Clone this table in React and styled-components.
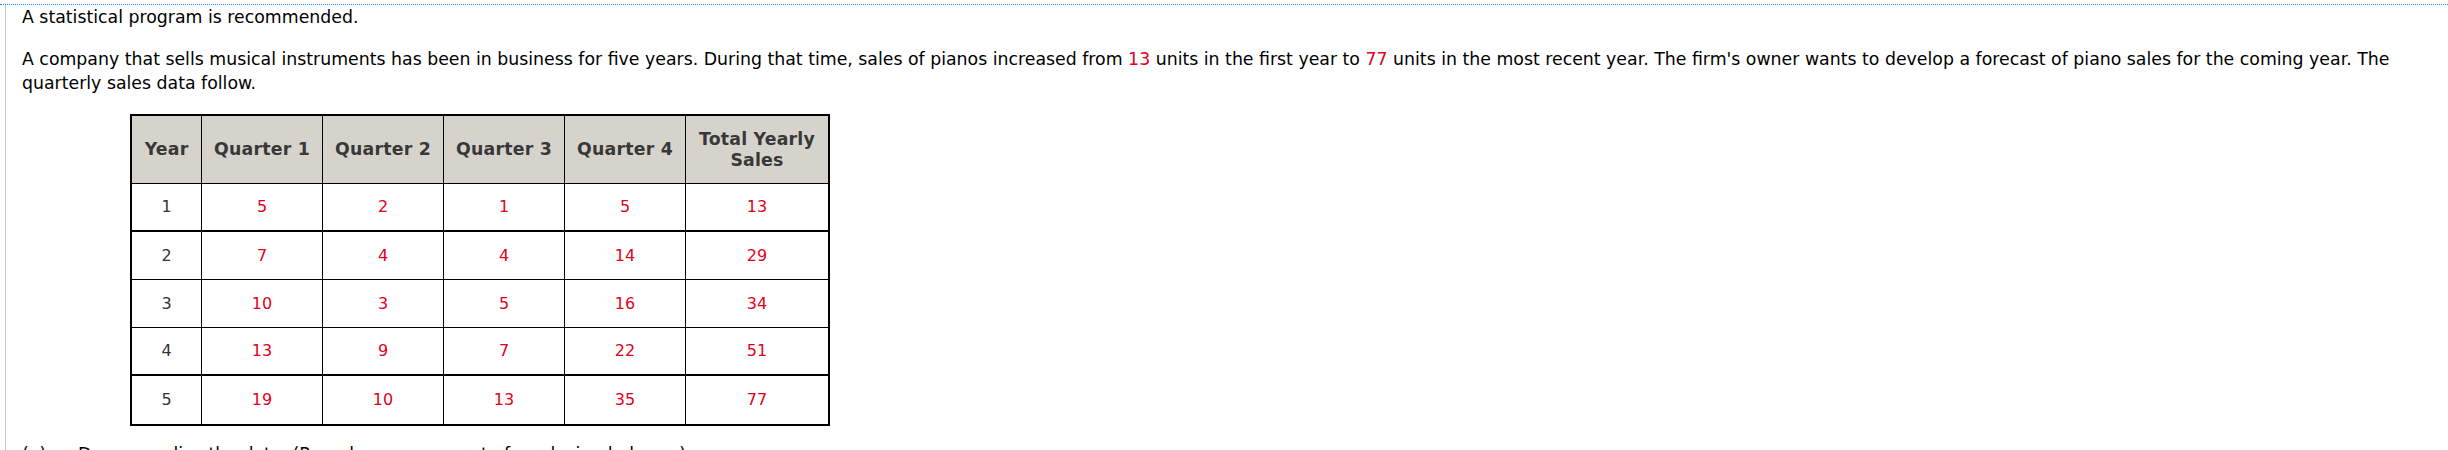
import styled, { createGlobalStyle } from 'styled-components';

const GlobalStyle = createGlobalStyle`
  body {
    margin: 0;
    background: #fff;
    font-family: "DejaVu Sans", Verdana, sans-serif;
  }
`;

const Page = styled.div`
  width: 2448px;
  height: 450px;
  overflow: hidden;
  padding-top: 4px;
  box-sizing: border-box;
`;

const DottedRule = styled.div`
  border-top: 1px dotted #1f86e0;
`;

const Panel = styled.div`
  margin-left: 5px;
  border-left: 1px solid #c8c8c8;
  padding: 1px 0 0 16px;
  min-height: 460px;
  color: #000;
  font-size: 17.33px;
  line-height: 23.4px;
`;

const Para = styled.p`
  margin: 0 0 19px;
`;

const Red = styled.span`
  color: #e3001b;
`;

const TableWrap = styled.div`
  margin-left: 108px;
`;

const Table = styled.table`
  border-collapse: separate;
  border-spacing: 0;
  border: 2px solid #000;
  font-size: 16px;
`;

const HeadCell = styled.th`
  box-sizing: border-box;
  width: ${p => p.$w}px;
  height: 68px;
  padding: 0 6px;
  background: #d6d3cc;
  color: #383838;
  font-size: 17.33px;
  font-weight: bold;
  letter-spacing: 0.2px;
  line-height: 21px;
  text-align: center;
  border-right: 1px solid #000;
  border-bottom: 1px solid #000;

  &:last-child {
    border-right: 0;
  }
`;

const Cell = styled.td`
  box-sizing: border-box;
  height: 48px;
  padding: 0 8px;
  text-align: center;
  line-height: 20px;
  color: ${p => (p.$red ? '#e3001b' : '#333')};
  border-right: 1px solid #000;
  border-bottom: ${p => (p.$last ? 0 : p.$heavy ? 2 : 1)}px solid #000;

  &:last-child {
    border-right: 0;
  }
`;

const Part = styled.div`
  display: flex;
  margin-top: 17px;
`;

const PartLabel = styled.span`
  width: 56px;
  flex-shrink: 0;
`;

const columns = [
  { label: 'Year', w: 70 },
  { label: 'Quarter 1', w: 121 },
  { label: 'Quarter 2', w: 121 },
  { label: 'Quarter 3', w: 121 },
  { label: 'Quarter 4', w: 121 },
  { label: 'Total Yearly Sales', w: 142 },
];

const rows = [
  [1, 5, 2, 1, 5, 13],
  [2, 7, 4, 4, 14, 29],
  [3, 10, 3, 5, 16, 34],
  [4, 13, 9, 7, 22, 51],
  [5, 19, 10, 13, 35, 77],
];

// rows 1 and 4 render with a heavier rule underneath in the source
const heavyRows = [0, 3];

export default function App() {
  return (
    <Page>
      <GlobalStyle />
      <DottedRule />
      <Panel>
        <Para>A statistical program is recommended.</Para>
        <Para>
          A company that sells musical instruments has been in business for five years. During that
          time, sales of pianos increased from <Red>13</Red> units in the first year to <Red>77</Red>{' '}
          units in the most recent year. The firm's owner wants to develop a forecast of piano sales
          for the coming year. The quarterly sales data follow.
        </Para>
        <TableWrap>
          <Table>
            <thead>
              <tr>
                {columns.map(c => (
                  <HeadCell key={c.label} $w={c.w}>
                    {c.label}
                  </HeadCell>
                ))}
              </tr>
            </thead>
            <tbody>
              {rows.map((r, i) => (
                <tr key={r[0]}>
                  {r.map((v, j) => (
                    <Cell
                      key={j}
                      $red={j > 0}
                      $heavy={heavyRows.includes(i)}
                      $last={i === rows.length - 1}
                    >
                      {v}
                    </Cell>
                  ))}
                </tr>
              ))}
            </tbody>
          </Table>
        </TableWrap>
        <Part>
          <PartLabel>(a)</PartLabel>
          <span>Deseasonalize the data. (Round your answers to four decimal places.)</span>
        </Part>
      </Panel>
    </Page>
  );
}
